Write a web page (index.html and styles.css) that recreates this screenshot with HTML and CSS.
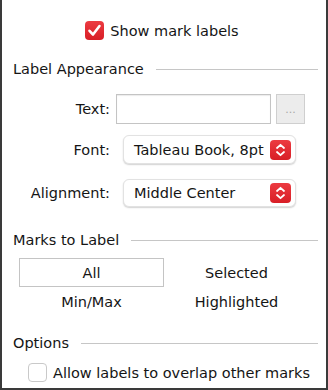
FILE: index.html
```html
<!DOCTYPE html>
<html lang="en">
  <head>
    <meta charset="UTF-8" />
    <title>Label</title>
    <link rel="stylesheet" href="styles.css">
  </head>
  <body>
    <div class="panel">
      <label class="show-row">
        <span class="check checked">
          <svg viewBox="0 0 19 19" width="19" height="19">
            <path d="M4.5 9.8 L8 13.5 L14.5 5" fill="none" stroke="#fff" stroke-width="2.6" stroke-linecap="round" stroke-linejoin="round"/>
          </svg>
        </span>
        Show mark labels
      </label>

      <div class="section-title section-first">
        <span>Label Appearance</span>
        <div class="rule"></div>
      </div>

      <div class="form-row row-text">
        <div class="field-label">Text:</div>
        <div class="text-input"></div>
        <div class="dots-button">...</div>
      </div>

      <div class="form-row row-font">
        <div class="field-label">Font:</div>
        <div class="select">
          <span>Tableau Book, 8pt</span>
          <span class="stepper">
            <svg viewBox="0 0 21 20" width="21" height="20">
              <path d="M7 8 L10.5 4.8 L14 8" fill="none" stroke="#fff" stroke-width="1.8" stroke-linecap="round" stroke-linejoin="round"/>
              <path d="M7 12 L10.5 15.2 L14 12" fill="none" stroke="#fff" stroke-width="1.8" stroke-linecap="round" stroke-linejoin="round"/>
            </svg>
          </span>
        </div>
      </div>

      <div class="form-row row-align">
        <div class="field-label">Alignment:</div>
        <div class="select">
          <span>Middle Center</span>
          <span class="stepper">
            <svg viewBox="0 0 21 20" width="21" height="20">
              <path d="M7 8 L10.5 4.8 L14 8" fill="none" stroke="#fff" stroke-width="1.8" stroke-linecap="round" stroke-linejoin="round"/>
              <path d="M7 12 L10.5 15.2 L14 12" fill="none" stroke="#fff" stroke-width="1.8" stroke-linecap="round" stroke-linejoin="round"/>
            </svg>
          </span>
        </div>
      </div>

      <div class="section-title section-marks">
        <span>Marks to Label</span>
        <div class="rule"></div>
      </div>

      <div class="marks-grid">
        <div class="mark-option active">All</div>
        <div class="mark-option">Selected</div>
        <div class="mark-option">Min/Max</div>
        <div class="mark-option">Highlighted</div>
      </div>

      <div class="section-title section-options">
        <span>Options</span>
        <div class="rule"></div>
      </div>

      <label class="overlap-row">
        <span class="check"></span>
        Allow labels to overlap other marks
      </label>
    </div>
  </body>
</html>
```

FILE: styles.css
```css
body {
  margin: 0;
  font-family: "DejaVu Sans", sans-serif;
  font-size: 14.5px;
  color: #151515;
  background: #fff;
}
.panel {
  width: 328px;
  height: 390px;
  box-sizing: border-box;
  border-left: 2px solid #3a3a3a;
  border-right: 2px solid #3a3a3a;
  border-bottom: 2px solid #3a3a3a;
  padding-top: 21px;
}
.show-row {
  display: flex;
  align-items: center;
  justify-content: center;
  gap: 6px;
  height: 19px;
  padding-right: 4px;
}
.check {
  display: inline-block;
  width: 19px;
  height: 19px;
  box-sizing: border-box;
  border-radius: 4px;
  border: 1px solid #c9c9c9;
  background: #fff;
}
.check.checked {
  border: none;
  background: linear-gradient(#ec3b41, #d81e26);
}
.check svg {
  display: block;
}
.section-title {
  display: flex;
  align-items: center;
  padding-left: 11px;
  padding-right: 8px;
  height: 20px;
}
.rule {
  flex: 1;
  height: 1px;
  background: #c6c6c6;
  margin-left: 12px;
}
.section-first {
  margin-top: 19px;
}
.form-row {
  display: flex;
  align-items: center;
}
.field-label {
  width: 108px;
  text-align: right;
}
.row-text {
  margin-top: 15px;
  height: 30px;
}
.text-input {
  margin-left: 6px;
  width: 155px;
  height: 30px;
  box-sizing: border-box;
  border: 1px solid #c4c4c4;
  box-shadow: inset 0 1px 1px rgba(0, 0, 0, 0.08);
}
.dots-button {
  margin-left: 5px;
  width: 29px;
  height: 30px;
  box-sizing: border-box;
  border: 1px solid #cfcfcf;
  background: #ececec;
  color: #a8a8a8;
  font-size: 11px;
  text-align: center;
  line-height: 30px;
}
.select {
  margin-left: 13px;
  width: 173px;
  box-sizing: border-box;
  display: flex;
  align-items: center;
  justify-content: space-between;
  padding-left: 10px;
  padding-right: 4px;
  border: 1px solid #e2e2e2;
  border-radius: 6px;
  box-shadow: 0 1px 1.5px rgba(0, 0, 0, 0.18);
  background: #fff;
}
.row-font {
  margin-top: 11px;
}
.row-font .select {
  height: 29px;
}
.row-align {
  margin-top: 15px;
}
.row-align .select {
  height: 28px;
}
.stepper {
  width: 21px;
  height: 20px;
  border-radius: 4px;
  background: linear-gradient(#ec3b41, #d81e26);
}
.stepper svg {
  display: block;
}
.section-marks {
  margin-top: 23px;
}
.marks-grid {
  margin-top: 8px;
  margin-left: 17px;
  display: grid;
  grid-template-columns: 145px 145px;
  grid-template-rows: 29px 29px;
}
.mark-option {
  display: flex;
  align-items: center;
  justify-content: center;
}
.mark-option.active {
  border: 1px solid #c4c4c4;
}
.section-options {
  margin-top: 17px;
}
.overlap-row {
  display: flex;
  align-items: center;
  gap: 6px;
  margin-top: 10px;
  padding-left: 26px;
  height: 19px;
}
```
